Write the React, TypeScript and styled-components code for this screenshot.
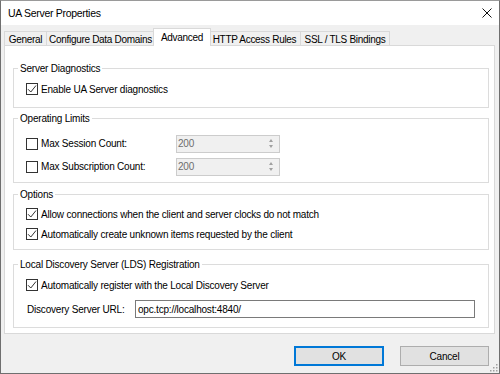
import React from 'react';
import styled, { createGlobalStyle } from 'styled-components';

const Global = createGlobalStyle`
  html, body { margin: 0; padding: 0; background: #ffffff; }
  body { width: 500px; height: 374px; overflow: hidden; }
  * { box-sizing: border-box; }
`;

const FONT = `"Liberation Sans", Arial, sans-serif`;

const Window = styled.div`
  position: relative;
  width: 500px;
  height: 374px;
  display: flex;
  flex-direction: column;
  border: 1px solid #6f6f6f;
  border-top-color: #9a9a9a;
  background: #f0f0f0;
  font-family: ${FONT};
  font-size: 10px;
  letter-spacing: -0.2px;
  color: #000;
`;

const TitleBar = styled.div`
  height: 24px;
  flex: none;
  background: #ffffff;
  display: flex;
  align-items: center;
  justify-content: space-between;
  padding: 0 8px 0 7px;
  font-size: 10.5px;
  letter-spacing: -0.3px;
`;

const CloseIcon = styled.svg`
  width: 10px;
  height: 10px;
  margin-right: -1px;
`;

const Body = styled.div`
  flex: 1;
  display: flex;
  flex-direction: column;
  padding: 3px 4px 0 3px;
`;

const TabStrip = styled.div`
  display: flex;
  align-items: flex-end;
  height: 18px;
  position: relative;
  z-index: 1;
  margin-bottom: -1px;
`;

const Tab = styled.div<{ $active?: boolean; $first?: boolean; $w: number }>`
  width: ${(p) => p.$w}px;
  height: ${(p) => (p.$active ? 18 : 15)}px;
  margin: 0 ${(p) => (p.$active ? -2 : 0)}px;
  padding-top: ${(p) => (p.$active ? 0 : 1)}px;
  display: flex;
  align-items: center;
  justify-content: center;
  background: ${(p) => (p.$active ? '#ffffff' : '#f0f0f0')};
  border: 1px solid #d9d9d9;
  border-bottom: ${(p) => (p.$active ? 'none' : '1px solid #d9d9d9')};
  border-left-width: ${(p) => (p.$first || p.$active ? 1 : 0)}px;
  position: relative;
  z-index: ${(p) => (p.$active ? 2 : 1)};
  white-space: nowrap;
  letter-spacing: -0.3px;
`;

const Panel = styled.div`
  height: 289px;
  flex: none;
  background: #ffffff;
  border: 1px solid #d9d9d9;
  display: flex;
  flex-direction: column;
  padding: 16px 5px 0 8px;
`;

const Group = styled.fieldset<{ $h: number; $mt: number }>`
  margin: ${(p) => p.$mt}px 0 0 0;
  height: ${(p) => p.$h}px;
  border: 1px solid #dcdcdc;
  padding: 0 6px 0 4px;
  min-width: 0;
  flex: none;
`;

const Legend = styled.legend`
  padding: 0 2px;
  line-height: 13px;
`;

const Rows = styled.div<{ $pt: number }>`
  padding: ${(p) => p.$pt}px 0 0 8px;
  display: flex;
  flex-direction: column;
`;

const Row = styled.div<{ $h: number }>`
  height: ${(p) => p.$h}px;
  display: flex;
  align-items: center;
  white-space: nowrap;
`;

const CheckLabel = styled.label<{ $w?: number }>`
  display: flex;
  align-items: center;
  gap: 3px;
  width: ${(p) => (p.$w ? `${p.$w}px` : 'auto')};
  white-space: nowrap;
`;

const Box = styled.span`
  width: 12px;
  height: 12px;
  border: 1px solid #333333;
  background: #ffffff;
  display: inline-flex;
  align-items: center;
  justify-content: center;
  flex: none;
`;

const Spin = styled.div`
  width: 104px;
  height: 18px;
  border: 1px solid #cccccc;
  background: #f0f0f0;
  display: flex;
  align-items: center;
  color: #6d6d6d;
  padding-left: 1px;
`;

const SpinValue = styled.span`
  flex: 1;
`;

const SpinButtons = styled.div`
  width: 14px;
  height: 100%;
  display: flex;
  flex-direction: column;
  align-items: center;
  justify-content: center;
  gap: 3px;
  margin-right: 1px;
`;

const Arrow = styled.span<{ $up?: boolean }>`
  width: 0;
  height: 0;
  border-left: 2.5px solid transparent;
  border-right: 2.5px solid transparent;
  ${(p) => (p.$up ? 'border-bottom: 3px solid #a0a0a0;' : 'border-top: 3px solid #a0a0a0;')}
`;

const FieldLabel = styled.span`
  width: 109px;
  padding-left: 1px;
  flex: none;
  white-space: nowrap;
`;

const TextInput = styled.div`
  width: 340px;
  height: 18px;
  border: 1px solid #7a7a7a;
  background: #ffffff;
  display: flex;
  align-items: center;
  padding-left: 2px;
`;

const ButtonRow = styled.div`
  display: flex;
  justify-content: flex-end;
  gap: 16px;
  padding: 12px 6px 0 0;
`;

const Button = styled.div<{ $default?: boolean; $w: number }>`
  width: ${(p) => p.$w}px;
  height: 20px;
  display: flex;
  align-items: center;
  justify-content: center;
  background: #e1e1e1;
  border: ${(p) => (p.$default ? '2px solid #0078d7' : '1px solid #adadad')};
`;

const Grip = styled.svg`
  position: absolute;
  right: 1px;
  bottom: 1px;
  width: 8px;
  height: 8px;
`;

function Check({ on }: { on?: boolean }) {
  return (
    <Box>
      {on && (
        <svg width="10" height="10" viewBox="0 0 10 10">
          <path d="M1 5.2 L3.8 8 L9 1.5" fill="none" stroke="#333" strokeWidth="1" />
        </svg>
      )}
    </Box>
  );
}

function SpinBox({ value }: { value: string }) {
  return (
    <Spin>
      <SpinValue>{value}</SpinValue>
      <SpinButtons>
        <Arrow $up />
        <Arrow />
      </SpinButtons>
    </Spin>
  );
}

const tabs = [
  { label: 'General', w: 43 },
  { label: 'Configure Data Domains', w: 108 },
  { label: 'Advanced', w: 58, active: true },
  { label: 'HTTP Access Rules', w: 92 },
  { label: 'SSL / TLS Bindings', w: 89 },
];

export default function App() {
  return (
    <>
      <Global />
      <Window>
        <TitleBar>
          <span>UA Server Properties</span>
          <CloseIcon viewBox="0 0 10 10">
            <path d="M0.5 0.5 L9.5 9.5 M9.5 0.5 L0.5 9.5" stroke="#111" strokeWidth="1" />
          </CloseIcon>
        </TitleBar>
        <Body>
          <TabStrip>
            {tabs.map((t, i) => (
              <Tab key={t.label} $w={t.w} $active={t.active} $first={i === 0}>
                {t.label}
              </Tab>
            ))}
          </TabStrip>
          <Panel>
            <Group $h={46} $mt={0}>
              <Legend>Server Diagnostics</Legend>
              <Rows $pt={4}>
                <Row $h={20}>
                  <CheckLabel>
                    <Check on />
                    Enable UA Server diagnostics
                  </CheckLabel>
                </Row>
              </Rows>
            </Group>
            <Group $h={71} $mt={4}>
              <Legend>Operating Limits</Legend>
              <Rows $pt={7}>
                <Row $h={23}>
                  <CheckLabel $w={150}>
                    <Check />
                    Max Session Count:
                  </CheckLabel>
                  <SpinBox value="200" />
                </Row>
                <Row $h={23}>
                  <CheckLabel $w={150}>
                    <Check />
                    Max Subscription Count:
                  </CheckLabel>
                  <SpinBox value="200" />
                </Row>
              </Rows>
            </Group>
            <Group $h={62} $mt={5}>
              <Legend>Options</Legend>
              <Rows $pt={3}>
                <Row $h={20}>
                  <CheckLabel>
                    <Check on />
                    Allow connections when the client and server clocks do not match
                  </CheckLabel>
                </Row>
                <Row $h={20}>
                  <CheckLabel>
                    <Check on />
                    Automatically create unknown items requested by the client
                  </CheckLabel>
                </Row>
              </Rows>
            </Group>
            <Group $h={70} $mt={8}>
              <Legend>Local Discovery Server (LDS) Registration</Legend>
              <Rows $pt={4}>
                <Row $h={20}>
                  <CheckLabel>
                    <Check on />
                    Automatically register with the Local Discovery Server
                  </CheckLabel>
                </Row>
                <Row $h={28}>
                  <FieldLabel>Discovery Server URL:</FieldLabel>
                  <TextInput>opc.tcp://localhost:4840/</TextInput>
                </Row>
              </Rows>
            </Group>
          </Panel>
          <ButtonRow>
            <Button $default $w={90}>OK</Button>
            <Button $w={89}>Cancel</Button>
          </ButtonRow>
        </Body>
        <Grip viewBox="0 0 8 8">
          {[
            [6, 0],
            [6, 3],
            [3, 3],
            [6, 6],
            [3, 6],
            [0, 6],
          ].map(([x, y]) => (
            <rect key={`${x}-${y}`} x={x} y={y} width="1.5" height="1.5" fill="#a0a0a0" />
          ))}
        </Grip>
      </Window>
    </>
  );
}
